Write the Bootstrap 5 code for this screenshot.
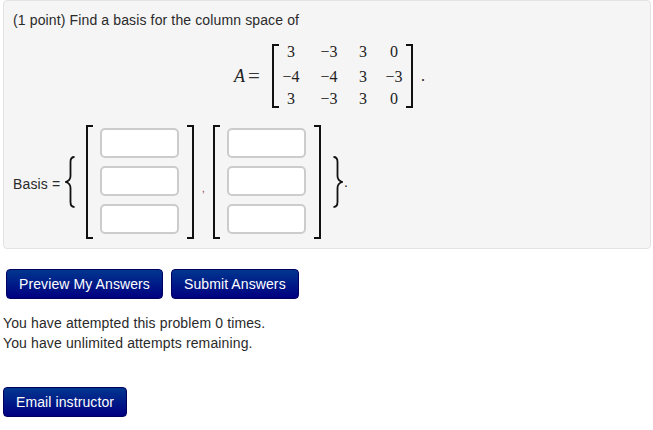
<!DOCTYPE html>
<html lang="en">
<head>
<meta charset="utf-8">
<title>Problem</title>
<link href="https://cdn.jsdelivr.net/npm/bootstrap@5.3.0/dist/css/bootstrap.min.css" rel="stylesheet">
<style>
html,body{background:#fff}
body{font-family:"Liberation Sans",Arial,sans-serif;font-size:14px;line-height:20px;letter-spacing:.13px;color:#2a2a2a;padding:0 2px 0 3px;overflow:hidden}
.prob-panel{height:249px;background:#f5f5f5;border:1px solid #e3e3e3;border-radius:4px;padding:9px 10px 0 9px}
.prob-panel p{margin:0;height:20px}
.math-row{margin-top:14px;height:64px;padding-left:6px;font-family:"Liberation Serif",serif;font-size:16px;letter-spacing:0;color:#222}
.math-var{font-style:italic;font-size:18px;margin-right:3px}
.math-eq{margin-right:12px;font-size:21px;line-height:1;color:#333}
.mat-br{width:7px;height:64px;border:2px solid #111}
.mat-l{border-right:0}
.mat-r{border-left:0}
.mat-grid{display:grid;grid-template-columns:37px 26px 42px 20px;grid-template-rows:25px 22px 17px;text-align:center;line-height:16px;width:127px}
.mat-grid span{align-self:start;white-space:nowrap}
.mat-grid span:nth-child(4n+1){padding-right:13px}
.mat-dot{margin-left:8px}
.basis-row{margin-top:17px;height:114px}
.basis-label{width:52px;flex:none;padding-top:3px}
.col-vec{display:flex;align-items:stretch;height:114px}
.vec-br{width:7px;border:2px solid #111}
.vec-l{border-right:0}
.vec-r{border-left:0}
.vec-cells{width:94px;padding:3px 0 0 7px;display:flex;flex-direction:column;gap:8px}
.vec-cells input{width:79px;height:30px;padding:0 6px;font-size:14px;border:2px solid #ccc;border-radius:5px;background:#fff;display:block;box-shadow:none}
.vec-comma{width:19px;text-align:center;font-size:10px;line-height:12px;padding-top:58px;color:#844}
.brace-svg{display:block;flex:none}
.brace-dot{margin-left:1px}
.act-btn{font-size:14px;line-height:20px;height:30px;padding:4px 12px;letter-spacing:.1px;color:#fff;border:1px solid #00005e;border-radius:4px;background:linear-gradient(#00368f,#000080)}
.act-btn:hover{color:#fff}
.act-row{margin:20px 0 0 3px;gap:8px}
.attempts{margin:14px 0 0 0}
.mail-row{margin-top:34px}
</style>
</head>
<body>
<div class="prob-panel">
  <p>(1 point) Find a basis for the column space of</p>
  <div class="math-row d-flex justify-content-center align-items-center">
    <span class="math-var">A</span><span class="math-eq">=</span>
    <div class="mat-br mat-l"></div>
    <div class="mat-grid">
      <span>3</span><span>−3</span><span>3</span><span>0</span>
      <span>−4</span><span>−4</span><span>3</span><span>−3</span>
      <span>3</span><span>−3</span><span>3</span><span>0</span>
    </div>
    <div class="mat-br mat-r"></div>
    <span class="mat-dot">.</span>
  </div>
  <div class="basis-row d-flex align-items-center">
    <span class="basis-label">Basis =</span>
    <svg class="brace-svg" width="10" height="52" viewBox="0 0 10 52" fill="none" stroke="#111" stroke-width="1.8"><path d="M9.5 1C6.5 1 5.5 3 5.5 6V20C5.5 23 4 25 .8 26C4 27 5.5 29 5.5 32V46C5.5 49 6.5 51 9.5 51"/></svg>
    <div class="d-flex" style="margin-left:11px">
      <div class="col-vec">
        <div class="vec-br vec-l"></div>
        <div class="vec-cells"><input type="text" aria-label="r1c1"><input type="text" aria-label="r2c1"><input type="text" aria-label="r3c1"></div>
        <div class="vec-br vec-r"></div>
      </div>
      <div class="vec-comma">,</div>
      <div class="col-vec">
        <div class="vec-br vec-l"></div>
        <div class="vec-cells"><input type="text" aria-label="r1c2"><input type="text" aria-label="r2c2"><input type="text" aria-label="r3c2"></div>
        <div class="vec-br vec-r"></div>
      </div>
    </div>
    <svg class="brace-svg" style="margin-left:12px" width="10" height="52" viewBox="0 0 10 52" fill="none" stroke="#111" stroke-width="1.8"><path d="M.5 1C3.5 1 4.5 3 4.5 6V20C4.5 23 6 25 9.2 26C6 27 4.5 29 4.5 32V46C4.5 49 3.5 51 .5 51"/></svg>
    <span class="brace-dot">.</span>
  </div>
</div>
<div class="act-row d-flex">
  <button type="button" class="btn act-btn">Preview My Answers</button>
  <button type="button" class="btn act-btn">Submit Answers</button>
</div>
<div class="attempts">You have attempted this problem 0 times.<br>You have unlimited attempts remaining.</div>
<div class="mail-row"><button type="button" class="btn act-btn">Email instructor</button></div>
<script src="https://cdn.jsdelivr.net/npm/bootstrap@5.3.0/dist/js/bootstrap.bundle.min.js"></script>
</body>
</html>
